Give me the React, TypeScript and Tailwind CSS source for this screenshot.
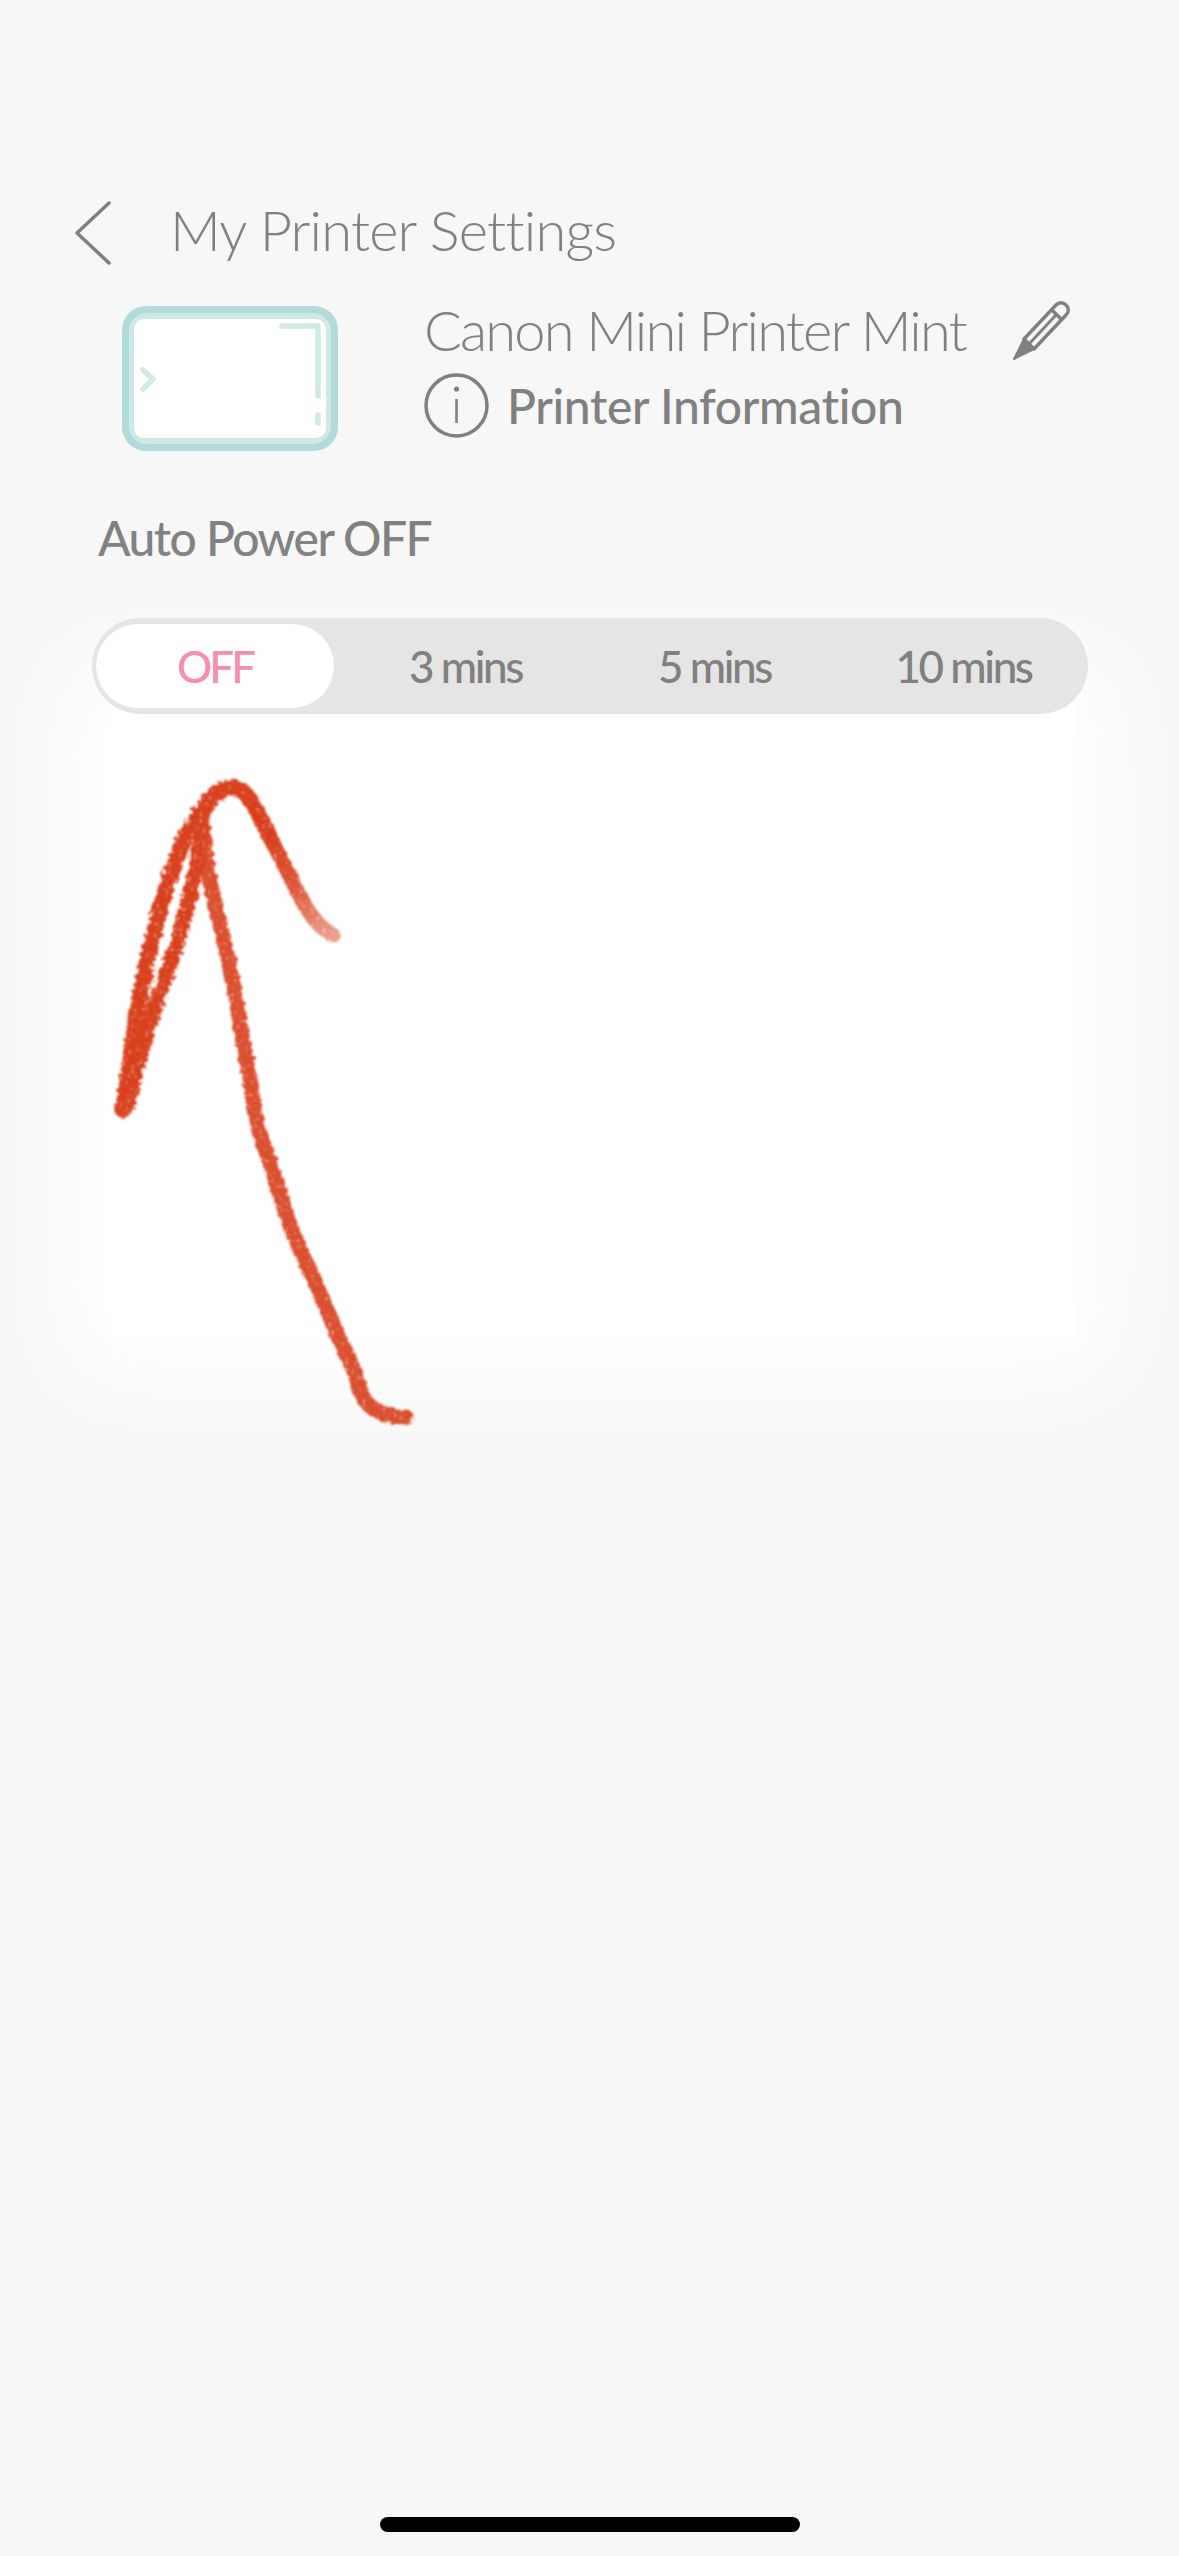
import React from 'react';

type Pt = [number, number];

// smooth line through the hand drawn points, midpoints as anchors
const smooth = (pts: Pt[]) => {
  let d = `M${pts[0][0]} ${pts[0][1]}`;
  for (let i = 1; i < pts.length - 1; i++) {
    const mx = (pts[i][0] + pts[i + 1][0]) / 2;
    const my = (pts[i][1] + pts[i + 1][1]) / 2;
    d += ` Q${pts[i][0]} ${pts[i][1]} ${mx} ${my}`;
  }
  const last = pts[pts.length - 1];
  return d + ` L${last[0]} ${last[1]}`;
};

// offsets: the svg starts at page x=0, y=720
const at = (pts: Pt[]): Pt[] => pts.map(([x, y]) => [x, y - 720]);

const outerHead = at([[123, 1110], [130, 1067], [140, 993], [152, 937], [168, 883], [183, 840], [203, 807], [223, 788], [240, 787], [253, 803], [270, 837]]);
const headFade = at([[270, 837], [287, 870], [303, 903], [318, 925], [333, 935]]);
const innerHead = at([[127, 1107], [140, 1053], [157, 1000], [173, 957], [187, 907], [198, 860], [202, 827], [203, 810]]);
const shaft = at([[202, 820], [205, 850], [212, 893], [223, 937], [235, 990], [240, 1027], [250, 1077], [258, 1130], [272, 1167], [282, 1203], [297, 1243], [313, 1277], [327, 1310], [343, 1347], [357, 1377], [363, 1400], [377, 1412], [395, 1417], [406, 1417]]);

const Arrow = () => (
  <svg width="1179" height="720" viewBox="0 0 1179 720" fill="none" className="block">
    <defs>
      <filter id="crayon" filterUnits="userSpaceOnUse" x="0" y="0" width="1179" height="720">
        <feTurbulence type="fractalNoise" baseFrequency="0.22" numOctaves="2" seed="4" result="wobble" />
        <feDisplacementMap in="SourceGraphic" in2="wobble" scale="9" result="moved" />
        <feTurbulence type="fractalNoise" baseFrequency="0.35" numOctaves="1" seed="9" />
        <feColorMatrix type="matrix" values="0 0 0 0 0  0 0 0 0 0  0 0 0 0 0  0 0 0 4 -0.55" result="grain" />
        <feComposite in="moved" in2="grain" operator="in" />
        <feGaussianBlur stdDeviation="0.8" />
      </filter>
      <linearGradient id="fade" gradientUnits="userSpaceOnUse" x1="270" y1="117" x2="333" y2="215">
        <stop offset="0" stopColor="#d8401c" />
        <stop offset="0.45" stopColor="#d8401c" stopOpacity="0.9" />
        <stop offset="1" stopColor="#d8401c" stopOpacity="0.5" />
      </linearGradient>
    </defs>
    <g filter="url(#crayon)" stroke="#d8401c" strokeLinecap="round" strokeLinejoin="round">
      <path d={smooth(outerHead)} strokeWidth="16" />
      <path d={smooth(headFade)} strokeWidth="15" stroke="url(#fade)" />
      <path d={smooth(innerHead)} strokeWidth="15" />
      <path d={smooth(shaft)} strokeWidth="15" opacity="0.92" />
    </g>
  </svg>
);

const PrinterIcon = () => (
  <svg width="216" height="145" viewBox="0 0 216 145" fill="none" className="shrink-0">
    <rect x="0" y="0" width="216" height="145" rx="24" fill="#b2dbd9" />
    <rect x="7" y="7" width="202" height="131" rx="18" fill="#d0e9e5" />
    <rect x="12" y="13" width="192" height="119" rx="10" fill="#ffffff" />
    <path d="M160 20H196V90" stroke="#d0e9e5" strokeWidth="5.5" strokeLinecap="round" strokeLinejoin="round" />
    <path d="M196 109V117" stroke="#d0e9e5" strokeWidth="5.5" strokeLinecap="round" />
    <path d="M21 64L31 73L21 83" stroke="#d0e9e5" strokeWidth="5.5" strokeLinecap="round" strokeLinejoin="round" />
  </svg>
);

const PencilIcon = () => (
  <svg width="58" height="60" viewBox="0 0 58 60" fill="none" className="shrink-0">
    <path d="M12 38L44 4C47 1 51 1 54 4C57 7 57 11 54 14L22 48Z" stroke="#808080" strokeWidth="3.5" strokeLinejoin="round" />
    <path d="M40 9L50 19" stroke="#808080" strokeWidth="3.5" />
    <path d="M12 38L22 48L2 58Z" fill="#808080" stroke="#808080" strokeWidth="2" strokeLinejoin="round" />
    <path d="M17 43L44 14" stroke="#808080" strokeWidth="3" />
  </svg>
);

const InfoIcon = () => (
  <svg width="65" height="65" viewBox="0 0 65 65" fill="none" className="shrink-0">
    <circle cx="32.5" cy="32.5" r="30.5" stroke="#808080" strokeWidth="3.5" />
    <circle cx="32.5" cy="16" r="2.6" fill="#808080" />
    <path d="M32.5 26V50" stroke="#808080" strokeWidth="2.6" />
  </svg>
);

const options = ['OFF', '3 mins', '5 mins', '10 mins'];

export default function App() {
  return (
    <div className="w-[1179px] h-[2556px] bg-[#f7f7f7] flex flex-col overflow-hidden text-[#808080] font-['Lato',sans-serif]">
      <div className="flex items-center pt-[202px] pl-[75px] h-[264px]">
        <svg width="36" height="64" viewBox="0 0 36 64" fill="none">
          <path d="M34 2L2 32L34 62" stroke="#808080" strokeWidth="3.5" strokeLinecap="round" strokeLinejoin="round" />
        </svg>
        <h1 className="ml-[59px] -mt-[6px] text-[56px] leading-[64px] font-light tracking-[-0.8px]">My Printer Settings</h1>
      </div>

      <div className="flex pl-[122px] pt-[42px]">
        <PrinterIcon />
        <div className="ml-[86px] -mt-[14px]">
          <div className="flex items-center h-[76px]">
            <span className="text-[56px] leading-[64px] font-light tracking-[-1.8px]">Canon Mini Printer Mint</span>
            <span className="ml-[46px] mt-[2px]"><PencilIcon /></span>
          </div>
          <div className="flex items-center mt-[5px]">
            <InfoIcon />
            <span className="ml-[18px] text-[48px] leading-[60px] font-medium tracking-[-0.35px]">Printer Information</span>
          </div>
        </div>
      </div>

      <div className="pl-[98px] pt-[59px] text-[48px] leading-[56px] font-medium tracking-[-1.55px]">Auto Power OFF</div>

      <div className="relative mt-[52px] mx-[92px] w-[996px] h-[752px]">
        {/* white panel melts into the page through a wide shadow */}
        <div className="absolute inset-x-[13px] top-[82px] bottom-[30px] bg-white shadow-[0_0_100px_50px_#ffffff]" />
        <div className="relative grid grid-cols-4 h-[96px] py-[6px] rounded-[48px] bg-[#e5e5e5]">
          {options.map((o, i) => (
            <div
              key={o}
              className={
                i === 0
                  ? 'ml-[4px] mr-[7px] rounded-[42px] bg-white flex items-center justify-center text-[#f58fab] text-[44px] font-medium tracking-[-3px]'
                  : 'flex items-center justify-center text-[44px] font-medium tracking-[-2.4px]'
              }
            >
              {o}
            </div>
          ))}
        </div>
        <div className="relative mt-[6px] -ml-[92px]">
          <Arrow />
        </div>
      </div>

      <div className="mt-auto mb-[24px] mx-auto w-[420px] h-[15px] rounded-full bg-black" />
    </div>
  );
}
